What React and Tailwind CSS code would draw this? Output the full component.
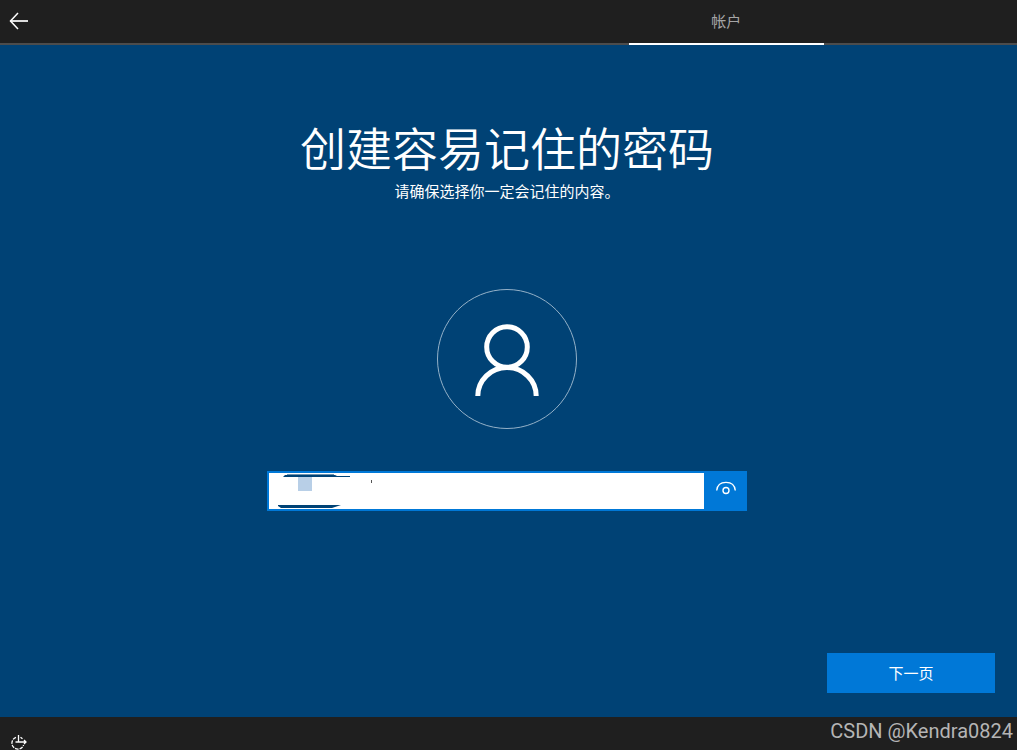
const BackIcon = () => (
  <svg width="20" height="18" viewBox="0 0 20 18" fill="none" stroke="currentColor" strokeWidth="1.5" aria-hidden="true">
    <path d="M9 1 1.5 9 9 17" />
    <path d="M1.5 9H19" strokeWidth="2" opacity=".85" />
  </svg>
);

const UserIcon = () => (
  <svg width="66" height="74" viewBox="0 0 66 74" fill="none" stroke="currentColor" strokeWidth="5" aria-hidden="true">
    <circle cx="33" cy="25" r="20.3" />
    <path d="M3.8 74a29.2 28.5 0 0 1 58.4 0" />
  </svg>
);

const EyeIcon = () => (
  <svg width="20" height="14" viewBox="0 0 20 14" fill="none" stroke="currentColor" strokeWidth="1.4" aria-hidden="true">
    <path d="M.7 9.5C1.2 4.5 4.8 1.4 10 1.4s8.8 3.1 9.3 8.1" />
    <circle cx="10" cy="9.5" r="3" />
  </svg>
);

const EaseOfAccessIcon = () => (
  <svg width="18" height="16" viewBox="0 0 18 16" fill="none" stroke="currentColor" strokeWidth="1.3" aria-hidden="true">
    <path d="M6 3.4A6 6 0 1 0 13.6 11" strokeDasharray="3.6 1" />
    <path d="M8.5 1v7M5.5 8H16M14 6l2 2-2 2M10.5 3.2l2 1.6" />
  </svg>
);

const InputMarks = () => (
  <svg className="pointer-events-none absolute top-0 left-0" width="110" height="36" viewBox="0 0 110 36" aria-hidden="true">
    <path d="M18 1h47v1H18z" fill="#7193ad" />
    <path d="M16 2h50l2 1h13v1H14z" fill="#004275" />
    <path d="M29 4h14v14H29z" fill="#b8cfe7" />
    <path d="M102 7h1v3h-1z" fill="#555" />
    <path d="M9 32h63l-3 1-6 2H12l-3-2z" fill="#004275" />
  </svg>
);

const App = () => {
  return (
    <div className="flex min-h-screen flex-col bg-[#004275] font-['Noto_Sans_CJK_SC',sans-serif] text-white">
      <header className="flex h-[45px] bg-[#1f1f1f]">
        <div className="flex flex-1 items-center border-b-2 border-[#4c4c4c] pb-px pl-[9px]">
          <button type="button" aria-label="返回">
            <BackIcon />
          </button>
        </div>
        <nav className="flex w-[195px] items-center justify-center border-b-2 border-white pb-px">
          <a href="#account" className="text-[15px] leading-5 text-[#a5a5a5]">帐户</a>
        </nav>
        <div className="w-[19%] border-b-2 border-[#4c4c4c]" />
      </header>

      <main className="flex flex-1 flex-col">
        <div className="flex flex-col items-center pt-[72px] pr-[3px]">
          <h1 className="text-[46px] leading-[58px] font-[350]">创建容易记住的密码</h1>
          <p className="mt-1.5 text-[15px] leading-5">请确保选择你一定会记住的内容。</p>

          <div className="mt-[88px] flex size-[140px] items-center justify-center rounded-full border border-[#94b1c8]">
            <UserIcon />
          </div>

          <div className="relative mt-[42px] flex h-10 w-full max-w-[480px] border-2 border-[#0078d7] bg-[#0078d7]">
            <input type="password" aria-label="密码" className="min-w-0 flex-1 bg-white px-2 text-[15px] text-black outline-none" />
            <button type="button" aria-label="显示密码" className="flex w-[41px] items-center justify-center pb-1.5 pl-0.5">
              <EyeIcon />
            </button>
            <InputMarks />
          </div>
        </div>

        <div className="mt-auto flex justify-end pr-[22px] pb-6">
          <button type="button" className="h-10 w-[168px] bg-[#0078d7] text-[15px] leading-5">下一页</button>
        </div>
      </main>

      <footer className="flex h-[33px] items-end justify-between bg-[#1f1f1f] pr-1 pl-[10px]">
        <button type="button" aria-label="轻松使用">
          <EaseOfAccessIcon />
        </button>
        <span className="self-start pt-0.5 font-[Roboto,sans-serif] text-[20px] leading-6 text-[#b5b5b5]">CSDN @Kendra0824</span>
      </footer>
    </div>
  );
};

export default App;
